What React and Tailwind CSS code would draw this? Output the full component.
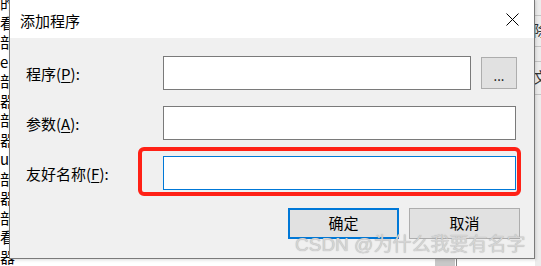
import React from "react";

const font = { fontFamily: '"Noto Sans CJK SC", "Liberation Sans", sans-serif' };

// chars of the window behind the dialog, cut off by it
const behind = ["的", "看", "部", "e", "部", "器", "部", "器", "u", "部", "器", "部", "看", "器"];

const Label = ({ text, hot }) => (
  <span className="w-[137px] text-[15px] text-black leading-none">
    {text}(<span className="underline underline-offset-2">{hot}</span>):
  </span>
);

const App = () => {
  return (
    <div
      className="relative w-[541px] h-[266px] overflow-hidden bg-white"
      style={font}
    >
      {/* window behind, left side */}
      <div className="absolute left-0 top-[-7px] flex flex-col text-[15px] leading-[19.5px] text-black">
        {behind.map((c, i) => (
          <span key={i}>{c}</span>
        ))}
      </div>

      {/* window behind, right side */}
      <div className="absolute left-[535px] top-0 w-[6px] h-[266px] bg-[#ececec]">
        <div className="h-[16px] border-b border-[#c4c4c4]" />
        <div className="h-[31px] border-b border-[#c4c4c4] text-[15px] leading-[28px] text-[#333] -ml-[2px] overflow-hidden">
          除
        </div>
        <div className="h-[15px] border-b border-[#c4c4c4]" />
        <div className="h-[33px] border-b border-[#c4c4c4] text-[15px] leading-[30px] text-[#333] -ml-[2px] overflow-hidden">
          文
        </div>
      </div>

      {/* window behind, bottom */}
      <div className="absolute left-[435px] top-[259px] w-[20px] h-[7px] bg-[#c8c8c8]" />
      <div className="absolute left-[456px] top-[259px] w-[1px] h-[7px] bg-[#808080]" />

      {/* dialog */}
      <div className="absolute left-[9px] top-[-1px] w-[526px] h-[260px] flex flex-col border border-[#7a7a7a] bg-[#f0f0f0] shadow-[1px_1px_3px_rgba(0,0,0,0.15)]">
        <div className="h-[38px] flex items-center justify-between pl-[10px] pr-[15px] bg-white">
          <span className="mt-[4px] text-[15px] text-black">添加程序</span>
          <svg width="13" height="13" viewBox="0 0 13 13">
            <path d="M0.5 0.5 L12.5 12.5 M12.5 0.5 L0.5 12.5" stroke="#000" strokeWidth="1" />
          </svg>
        </div>

        <div className="flex flex-col pt-[18px] pl-[16px] pr-[16px]">
          <div className="flex items-center h-[34px]">
            <Label text="程序" hot="P" />
            <div className="w-[308px] h-[34px] bg-white border border-[#7a7a7a]" />
            <button className="ml-[10px] w-[36px] h-[32px] flex items-end justify-center pb-[6px] bg-[#e1e1e1] border border-[#adadad] text-[13px] leading-none text-black">
              ...
            </button>
          </div>

          <div className="flex items-center h-[34px] mt-[16px]">
            <Label text="参数" hot="A" />
            <div className="w-[353px] h-[34px] bg-white border border-[#7a7a7a]" />
          </div>

          <div className="flex items-center h-[34px] mt-[16px]">
            <Label text="友好名称" hot="F" />
            <div className="w-[353px] h-[34px] bg-white border border-[#0078d7]" />
          </div>

          <div className="flex justify-end gap-[10px] mt-[18px] -mr-[2px]">
            <button className="w-[111px] h-[31px] bg-[#e1e1e1] border-2 border-[#0078d7] text-[15px] text-black">
              确定
            </button>
            <button className="w-[111px] h-[31px] bg-[#e1e1e1] border border-[#adadad] text-[15px] text-black">
              取消
            </button>
          </div>
        </div>
      </div>

      {/* red annotation box */}
      <div className="absolute left-[138px] top-[147px] w-[383px] h-[49px] border-4 border-[#ff2116] rounded-[6px]" />

      {/* watermark */}
      <div
        className="absolute left-[295px] top-[233px] text-[19px] leading-[24px] text-[#d4d4d4] whitespace-nowrap"
        style={{
          fontFamily: '"Liberation Sans", "Noto Sans CJK SC", sans-serif',
          textShadow: "0 0 1px rgba(120,120,120,0.6)",
        }}
      >
        CSDN @为什么我要有名字
      </div>
    </div>
  );
};

export default App;
